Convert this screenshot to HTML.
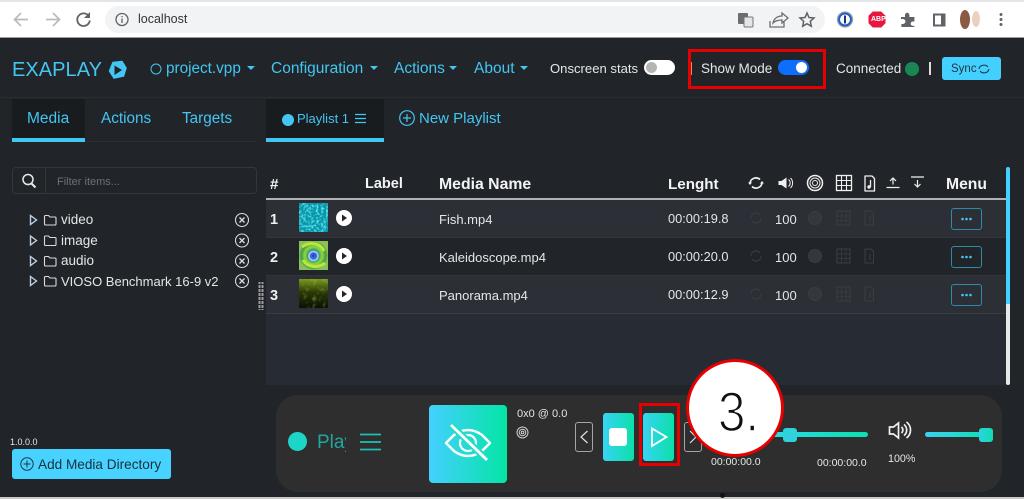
<!DOCTYPE html>
<html><head><meta charset="utf-8"><style>
*{box-sizing:border-box}
html,body{margin:0;padding:0;width:1024px;height:499px;overflow:hidden;background:#212529;font-family:"Liberation Sans",sans-serif}
.t{position:absolute;white-space:nowrap;line-height:1}
.b{position:absolute}
.c{color:#43c6f2}
.w{color:#e4e6e8}
svg{position:absolute;overflow:visible}
.h{font-weight:bold;color:#f2f3f4;font-size:15.200px}
.caret{position:absolute;width:0;height:0;border:4.500px solid transparent;border-top:4.500px solid #43c6f2;border-bottom:0}
.dots{position:absolute;width:31px;height:22px;border:1px solid #2e8ba8;border-radius:3px;left:951px}
.dots svg{left:0;top:0}
</style></head><body>
<!-- browser bar -->
<div class="b" style="left:0;top:0;width:1024px;height:38px;background:#fff"></div>
<div class="b" style="left:0;top:0;width:1024px;height:2px;background:#e3e5e8"></div>
<div class="b" style="left:105px;top:6px;width:720px;height:27px;background:#f1f3f4;border-radius:14px"></div>
<svg style="left:0;top:0" width="1024" height="38" fill="none">
<path d="M28 19.500H15M21 13l-6.500 6.500L21 26" stroke="#b8bbbf" stroke-width="1.700"/>
<path d="M46 19.500h13M53 13l6.500 6.500L53 26" stroke="#b8bbbf" stroke-width="1.700"/>
<path d="M89 16.500a6.300 6.300 0 1 0 .8 4" stroke="#5f6368" stroke-width="1.800"/><path d="M90 12v6h-6z" fill="#5f6368"/>
<circle cx="122" cy="19.500" r="6" stroke="#5f6368" stroke-width="1.300"/><path d="M122 18.500v4.500M122 16v1.300" stroke="#5f6368" stroke-width="1.300"/>
<rect x="738" y="13" width="10" height="11" rx="1" fill="#6a6e72"/><rect x="744" y="17" width="9" height="10" rx="1" fill="#e4e5e6" stroke="#777"/>
<path d="M770 21v6h14v-5M773 23c1-5 5-7 9-7v-3l6 5-6 5v-3c-4 0-7 1-9 3z" stroke="#6a6e72" stroke-width="1.300"/>
<path d="M807 13l2 4.500 5 .5-3.700 3.300 1 4.900-4.300-2.500-4.300 2.500 1-4.900L800 18l5-.5z" stroke="#5f6368" stroke-width="1.500"/>
<circle cx="845" cy="19.500" r="7.500" fill="#1a5fc8" stroke="#9aa0a6" stroke-width="1.300"/><circle cx="845" cy="19.500" r="5" fill="#fff"/><rect x="844" y="15.500" width="2" height="8" fill="#1a3a70"/>
<path d="M873 12h8l4 4v7l-4 4h-8l-4-4v-7z" fill="#e8173f" stroke="#e8173f" stroke-linejoin="round"/>
<path d="M901 17h4v-2a2.200 2.200 0 0 1 4.400 0v2h5v4.500h-1.500a2.200 2.200 0 0 0 0 4.400h1.500V27h-13v-3h1.500a2.500 2.500 0 0 0 0-5H901z" fill="#5f6368"/>
<rect x="934" y="14.500" width="10.500" height="11" stroke="#5f6368" stroke-width="2"/><rect x="941" y="14" width="4" height="12" fill="#5f6368"/>
<ellipse cx="965" cy="19.500" rx="5" ry="9.500" fill="#8a5a44"/><ellipse cx="976" cy="19" rx="4" ry="8" fill="#eccfc0"/>
<circle cx="1001" cy="14.500" r="1.500" fill="#5f6368"/><circle cx="1001" cy="19.500" r="1.500" fill="#5f6368"/><circle cx="1001" cy="24.500" r="1.500" fill="#5f6368"/>
</svg>
<div class="t" style="left:871px;top:16px;font-size:7px;font-weight:bold;color:#fff">ABP</div>
<div class="t" style="left:138px;top:13px;font-size:12.500px;color:#333">localhost</div>
<div class="b" style="left:0;top:37px;width:1024px;height:1px;background:#9a9c9e"></div>
<!-- navbar -->
<div class="t c" style="left:12px;top:60px;font-size:20px;letter-spacing:.05px">EXAPLAY</div>
<svg style="left:108px;top:60px" width="20" height="20"><path d="M5 2.500L14 1.500 18 8 15.500 16 6 18 1.500 11z" fill="#43c6f2" stroke="#43c6f2" stroke-width="1.500" stroke-linejoin="round"/><path d="M6.500 5.500l7.500 4.500-7.500 5z" fill="#212529"/></svg>
<svg style="left:150px;top:63px" width="12" height="12"><circle cx="6" cy="6" r="5" fill="none" stroke="#43c6f2" stroke-width="1"/></svg>
<div class="t c" style="left:166px;top:61px;font-size:15.300px">project.vpp</div><div class="caret" style="left:247px;top:66px"></div>
<div class="t c" style="left:271px;top:61px;font-size:15.500px">Configuration</div><div class="caret" style="left:370px;top:66px"></div>
<div class="t c" style="left:394px;top:61px;font-size:15.500px">Actions</div><div class="caret" style="left:449px;top:66px"></div>
<div class="t c" style="left:474px;top:61px;font-size:15.500px">About</div><div class="caret" style="left:520px;top:66px"></div>
<div class="t w" style="left:550px;top:62px;font-size:13.100px">Onscreen stats</div>
<div class="b" style="left:644px;top:60px;width:31px;height:15px;border-radius:8px;background:#fff"></div>
<div class="b" style="left:646px;top:62px;width:11px;height:11px;border-radius:50%;background:#b5b5b5"></div>
<div class="b" style="left:691px;top:62px;width:1px;height:13px;background:#c89a50"></div>
<div class="t w" style="left:701px;top:62px;font-size:13.500px">Show Mode</div>
<div class="b" style="left:778px;top:60px;width:31px;height:15px;border-radius:8px;background:#0d6efd"></div>
<div class="b" style="left:796px;top:62px;width:11px;height:11px;border-radius:50%;background:#fff"></div>
<div class="b" style="left:825px;top:62px;width:1px;height:13px;background:#bbb"></div>
<div class="t w" style="left:836px;top:62px;font-size:13.500px">Connected</div>
<div class="b" style="left:905px;top:62px;width:14px;height:14px;border-radius:50%;background:#198754"></div>
<div class="b" style="left:929px;top:62px;width:2px;height:13px;background:#ddd"></div>
<div class="b" style="left:942px;top:57px;width:59px;height:23px;border-radius:3px;background:#43d0ff"></div>
<div class="t" style="left:951px;top:64px;font-size:11.500px;color:#1d3540">Sync</div>
<svg style="left:978px;top:63px" width="12" height="12" fill="none" stroke="#1d3540"><path d="M1 6a5 4.500 0 0 1 9-2M11 6a5 4.500 0 0 1-9 2" stroke-width="1"/></svg>
<div class="b" style="left:0;top:97px;width:1024px;height:1px;background:#2a2e33"></div>
<!-- tabs -->
<div class="b" style="left:12px;top:99px;width:73px;height:39px;background:#191c1f"></div>
<div class="b" style="left:12px;top:138px;width:73px;height:4px;background:#43c6f2"></div>
<div class="b" style="left:85px;top:141px;width:172px;height:1px;background:#2c3035"></div>
<div class="t c" style="left:27px;top:111px;font-size:15.500px">Media</div>
<div class="t c" style="left:101px;top:111px;font-size:15.300px">Actions</div>
<div class="t c" style="left:182px;top:111px;font-size:15.300px">Targets</div>
<div class="b" style="left:266px;top:99px;width:118px;height:39px;background:#191c1f"></div>
<div class="b" style="left:266px;top:138px;width:118px;height:4px;background:#43c6f2"></div>
<div class="b" style="left:282px;top:114px;width:12px;height:12px;border-radius:50%;background:#43c6f2"></div>
<div class="t c" style="left:297px;top:112px;font-size:13px">Playlist 1</div>
<svg style="left:355px;top:113px" width="12" height="11" stroke="#43c6f2" stroke-width="1.200"><path d="M0 1.500h11M0 5.500h11M0 9.500h11"/></svg>
<svg style="left:399px;top:110px" width="16" height="16" fill="none" stroke="#43c6f2" stroke-width="1.200"><circle cx="8" cy="8" r="7.300"/><path d="M8 4v8M4 8h8"/></svg>
<div class="t c" style="left:419px;top:111px;font-size:15px">New Playlist</div>
<!-- filter -->
<div class="b" style="left:12px;top:167px;width:245px;height:27px;border:1px solid #33373c;border-radius:4px"></div>
<div class="b" style="left:45px;top:168px;width:1px;height:25px;background:#33373c"></div>
<svg style="left:21px;top:173px" width="16" height="16" fill="none" stroke="#e8e8e8" stroke-width="1.500"><circle cx="7" cy="6.500" r="5"/><path d="M10.500 10.500l4 4" stroke-width="2"/></svg>
<div class="t" style="left:57px;top:177px;font-size:11px;color:#6c7177">Filter items...</div>
<!-- tree -->
<svg style="left:0;top:210px" width="260" height="85" fill="none" stroke="#d8dce0" stroke-width="1.100">
<g><path d="M30.500 5.500l6 4.500-6 4.500z" stroke="#bcd0e8" stroke-width="1.400"/><path d="M44.500 6.500a1 1 0 0 1 1-1h3l1.500 1.500h5a1 1 0 0 1 1 1v6a1 1 0 0 1-1 1h-9.500a1 1 0 0 1-1-1z"/><circle cx="242" cy="10" r="6.500"/><path d="M239.500 7.500l5 5M244.500 7.500l-5 5" stroke-width="1.400"/></g>
<g transform="translate(0,20.500)"><path d="M30.500 5.500l6 4.500-6 4.500z" stroke="#bcd0e8" stroke-width="1.400"/><path d="M44.500 6.500a1 1 0 0 1 1-1h3l1.500 1.500h5a1 1 0 0 1 1 1v6a1 1 0 0 1-1 1h-9.500a1 1 0 0 1-1-1z"/><circle cx="242" cy="10" r="6.500"/><path d="M239.500 7.500l5 5M244.500 7.500l-5 5" stroke-width="1.400"/></g>
<g transform="translate(0,41)"><path d="M30.500 5.500l6 4.500-6 4.500z" stroke="#bcd0e8" stroke-width="1.400"/><path d="M44.500 6.500a1 1 0 0 1 1-1h3l1.500 1.500h5a1 1 0 0 1 1 1v6a1 1 0 0 1-1 1h-9.500a1 1 0 0 1-1-1z"/><circle cx="242" cy="10" r="6.500"/><path d="M239.500 7.500l5 5M244.500 7.500l-5 5" stroke-width="1.400"/></g>
<g transform="translate(0,61)"><path d="M30.500 5.500l6 4.500-6 4.500z" stroke="#bcd0e8" stroke-width="1.400"/><path d="M44.500 6.500a1 1 0 0 1 1-1h3l1.500 1.500h5a1 1 0 0 1 1 1v6a1 1 0 0 1-1 1h-9.500a1 1 0 0 1-1-1z"/><circle cx="242" cy="10" r="6.500"/><path d="M239.500 7.500l5 5M244.500 7.500l-5 5" stroke-width="1.400"/></g>
</svg>
<div class="t w" style="left:61px;top:213px;font-size:13.500px">video</div>
<div class="t w" style="left:61px;top:234px;font-size:13.500px">image</div>
<div class="t w" style="left:61px;top:254px;font-size:13.500px">audio</div>
<div class="t w" style="left:61px;top:275px;font-size:13px">VIOSO Benchmark 16-9 v2</div>
<svg style="left:258px;top:281px" width="6" height="30" fill="#9a9c9e"><path d="M.500 1h2v28h-2zM3.500 1h2v28h-2z"/><path d="M0 3h6v1H0zM0 7h6v1H0zM0 11h6v1H0zM0 15h6v1H0zM0 19h6v1H0zM0 23h6v1H0zM0 27h6v1H0z" fill="#212529"/></svg>
<!-- table head -->
<div class="t h" style="left:270px;top:177px">#</div>
<div class="t h" style="left:365px;top:177px;font-size:14.500px">Label</div>
<div class="t h" style="left:439px;top:177px;font-size:15.800px">Media Name</div>
<div class="t h" style="left:668px;top:177px">Lenght</div>
<div class="t h" style="left:946px;top:177px;font-size:15.700px">Menu</div>
<svg style="left:745px;top:172px" width="185" height="22" fill="none" stroke="#f0f0f0">
<path d="M5 11a6 6 0 0 1 10-3.500M17 11a6 6 0 0 1-10 3.500" stroke-width="1.700"/><path d="M3 10.500h4l-2 2.500zM15 11.500h4l-2-2.500z" fill="#f0f0f0" stroke="none"/>
<path d="M33.500 9h3l5-3.500v11L36.500 13h-3z" fill="#f0f0f0" stroke="none"/><path d="M43.500 7.500a4.500 4.500 0 0 1 0 7M45.500 6a7 7 0 0 1 0 10" stroke-width="1"/>
<circle cx="70" cy="11" r="7.500" stroke-width="1.500"/><circle cx="70" cy="11" r="5" stroke-width="1"/><circle cx="70" cy="11" r="2.500" stroke-width="1"/>
<rect x="91.500" y="3.500" width="15" height="15" stroke-width="1.300"/><path d="M96.500 4v14M101.500 4v14M92 8.500h14M92 13.500h14" stroke-width="1.100"/>
<path d="M120 4h7l2.500 2.500V19H120z" stroke-width="1.300" stroke-linejoin="round"/><path d="M125.500 8v7" stroke-width="1.300"/><circle cx="124" cy="15" r="1.700" fill="#f0f0f0" stroke="none"/>
<path d="M141.500 15.500h13M148 12.500V6M145 9l3-3 3 3" stroke-width="1.200"/>
<path d="M166 5h13M172.500 8v7M169.500 12l3 3 3-3" stroke-width="1.200"/>
</svg>
<div class="b" style="left:266px;top:198px;width:740px;height:2px;background:#b0b2b4"></div>
<!-- rows -->
<div class="b" style="left:266px;top:200px;width:740px;height:37px;background:#2c3036"></div>
<div class="b" style="left:266px;top:237px;width:740px;height:1px;background:#32363b"></div>
<div class="b" style="left:266px;top:275px;width:740px;height:1px;background:#32363b"></div>
<div class="b" style="left:266px;top:276px;width:740px;height:37px;background:#2c3036"></div>
<div class="b" style="left:266px;top:313px;width:740px;height:1px;background:#3a3e43"></div>
<div class="t" style="left:270px;top:213px;font-size:14.500px;font-weight:bold;color:#f0f0f0">1</div>
<div class="t" style="left:270px;top:251px;font-size:14.500px;font-weight:bold;color:#f0f0f0">2</div>
<div class="t" style="left:270px;top:289px;font-size:14.500px;font-weight:bold;color:#f0f0f0">3</div>
<svg style="left:299px;top:203px" width="30" height="30"><defs>
<filter id="n" x="0" y="0" width="100%" height="100%"><feTurbulence type="fractalNoise" baseFrequency=".4" numOctaves="2" seed="4"/><feColorMatrix values="0 0 0 0 .1  0 0 0 0 .88  0 0 0 0 .92  0 0 0 3 -1.300"/></filter>
<filter id="n2" x="0" y="0" width="100%" height="100%"><feTurbulence type="fractalNoise" baseFrequency=".22" numOctaves="2" seed="9"/><feColorMatrix values="0 0 0 0 .45  0 0 0 0 .6  0 0 0 0 .08  0 0 0 2 -1.050"/></filter>
<radialGradient id="k"><stop offset="0" stop-color="#2a3fb8"/><stop offset=".25" stop-color="#3f7ad8"/><stop offset=".42" stop-color="#38a878"/><stop offset=".6" stop-color="#9ad82c"/><stop offset=".85" stop-color="#3f9a50"/><stop offset="1" stop-color="#8ac058"/></radialGradient>
<linearGradient id="p" x1="0" y1="0" x2="0" y2="1"><stop offset="0" stop-color="#7a9a1c"/><stop offset=".45" stop-color="#2a3a08"/><stop offset="1" stop-color="#0a1003"/></linearGradient></defs>
<rect width="29" height="29" fill="#0d92a8"/><rect width="29" height="29" filter="url(#n)"/></svg>
<svg style="left:299px;top:241px" width="30" height="30"><rect width="29" height="29" fill="url(#k)"/><circle cx="14.500" cy="15" r="4.500" fill="none" stroke="#b0c4ff" stroke-width="1.600"/><path d="M3 6c8-6 18-4 22 4M26 22c-8 6-18 4-22-3" fill="none" stroke="#b8e840" stroke-width="3"/></svg>
<svg style="left:299px;top:279px" width="30" height="30"><rect width="29" height="29" fill="url(#p)"/><rect width="29" height="29" filter="url(#n2)" opacity=".6"/></svg>
<svg style="left:336px;top:210px" width="16" height="92"><g id="pb"><circle cx="8" cy="8" r="8" fill="#fff"/><path d="M6 4.500l5 3.500-5 3.500z" fill="#2a2230"/></g><use href="#pb" y="38"/><use href="#pb" y="76"/></svg>
<div class="t w" style="left:439px;top:213px;font-size:13px">Fish.mp4</div>
<div class="t w" style="left:439px;top:251px;font-size:13px">Kaleidoscope.mp4</div>
<div class="t w" style="left:439px;top:289px;font-size:13px">Panorama.mp4</div>
<div class="t w" style="left:668px;top:213px;font-size:12.800px">00:00:19.8</div>
<div class="t w" style="left:668px;top:251px;font-size:12.800px">00:00:20.0</div>
<div class="t w" style="left:668px;top:289px;font-size:12.800px">00:00:12.9</div>
<div class="t w" style="left:775px;top:213px;font-size:13px">100</div>
<div class="t w" style="left:775px;top:251px;font-size:13px">100</div>
<div class="t w" style="left:775px;top:289px;font-size:13px">100</div>
<svg style="left:745px;top:207px" width="140" height="100" fill="none" stroke="#3a3e43">
<g id="ri"><path d="M6 11a5 5 0 0 1 9-3M16 11a5 5 0 0 1-9 3" stroke-width="1"/><circle cx="70" cy="11" r="6.500" fill="#34383d" stroke-width="1"/><rect x="92" y="4" width="13" height="14" stroke-width="1"/><path d="M96.500 4v14M101 4v14M92 9h13M92 13.500h13" stroke-width=".8"/><path d="M120 4h6l2.500 2.500V18H120z" stroke-width="1"/><path d="M125 9v6" stroke-width="1"/></g>
<use href="#ri" y="38"/><use href="#ri" y="76"/>
</svg>
<div class="dots" style="top:208px"><svg width="29" height="20" fill="#43c6f2"><circle cx="10.500" cy="10" r="1.300"/><circle cx="14.500" cy="10" r="1.300"/><circle cx="18.500" cy="10" r="1.300"/></svg></div>
<div class="dots" style="top:246px"><svg width="29" height="20" fill="#43c6f2"><circle cx="10.500" cy="10" r="1.300"/><circle cx="14.500" cy="10" r="1.300"/><circle cx="18.500" cy="10" r="1.300"/></svg></div>
<div class="dots" style="top:284px"><svg width="29" height="20" fill="#43c6f2"><circle cx="10.500" cy="10" r="1.300"/><circle cx="14.500" cy="10" r="1.300"/><circle cx="18.500" cy="10" r="1.300"/></svg></div>
<!-- scrollbar -->
<div class="b" style="left:1006px;top:167px;width:4px;height:137px;background:#43d0ff;border-radius:2px 2px 0 0"></div>
<div class="b" style="left:1006px;top:304px;width:4px;height:81px;background:#e8e8e8;border-radius:0 0 2px 2px"></div>
<div class="b" style="left:266px;top:314px;width:740px;height:71px;background:#272b33"></div>
<!-- left bottom -->
<div class="t" style="left:10px;top:438px;font-size:9px;color:#e4e6e8">1.0.0.0</div>
<div class="b" style="left:12px;top:449px;width:159px;height:30px;border-radius:3px;background:#48d2ff"></div>
<svg style="left:20px;top:457px" width="15" height="15" fill="none" stroke="#1d3a48" stroke-width="1"><circle cx="7" cy="7" r="6.200"/><path d="M7 3.500v7M3.500 7h7"/></svg>
<div class="t" style="left:38px;top:458px;font-size:13.600px;color:#17303c">Add Media Directory</div>
<!-- player -->
<div class="b" style="left:276px;top:395px;width:726px;height:97px;border-radius:22px;background:#2e2e2e"></div>
<div class="b" style="left:288px;top:432px;width:19px;height:19px;border-radius:50%;background:#1dd5c6"></div>
<div class="b" style="left:317px;top:432px;width:29px;height:22px;overflow:hidden"><div class="t" style="left:0;top:1px;font-size:19px;color:#1fa89e">Playlist</div></div>
<svg style="left:360px;top:433px" width="21" height="18" stroke="#1dc0b4" stroke-width="1.800"><path d="M0 1.500h21M0 9h21M0 16.500h21"/></svg>
<svg style="left:429px;top:405px" width="78" height="78"><defs><linearGradient id="g"><stop offset="0" stop-color="#44d0ff"/><stop offset="1" stop-color="#03e5a5"/></linearGradient></defs>
<rect width="78" height="78" rx="4" fill="url(#g)"/>
<g fill="none" stroke="#fff" stroke-width="2.500" stroke-linejoin="round"><path d="M17 38l8-8c4-3 9-5 14-5s10 2 14 5l8 8-8 8c-4 3-9 5-14 5s-10-2-14-5z"/><circle cx="39" cy="38" r="8" stroke-width="2.200"/><path d="M22 20l36 35" stroke-width="7" stroke="#25dcc8"/><path d="M22 20l36 35" stroke-width="2.800"/></g></svg>
<div class="t w" style="left:517px;top:409px;font-size:11px">0x0 @ 0.0</div>
<svg style="left:516px;top:426px" width="13" height="13" fill="none" stroke="#d0d0d0" stroke-width="1"><circle cx="6.500" cy="6.500" r="5.500"/><circle cx="6.500" cy="6.500" r="3.300"/><circle cx="6.500" cy="6.500" r="1.300"/></svg>
<div class="b" style="left:575px;top:422px;width:18px;height:30px;border:1px solid #a5a5a5;border-radius:3px"></div>
<svg style="left:575px;top:422px" width="18" height="30" fill="none" stroke="#e0e0e0" stroke-width="1.200"><path d="M12.500 9l-6.500 6 6.500 6"/></svg>
<div class="b" style="left:684px;top:422px;width:18px;height:30px;border:1px solid #a5a5a5;border-radius:3px"></div>
<svg style="left:684px;top:422px" width="18" height="30" fill="none" stroke="#e0e0e0" stroke-width="1.200"><path d="M6 9l6 6-6 6"/></svg>
<svg style="left:603px;top:413px" width="31" height="48"><defs><linearGradient id="g2"><stop offset="0" stop-color="#38d4f4"/><stop offset="1" stop-color="#0ae0a8"/></linearGradient></defs><rect width="31" height="48" rx="3" fill="url(#g2)"/><rect x="6" y="15" width="18" height="18" rx="3" fill="#fff"/></svg>
<svg style="left:643px;top:413px" width="31" height="48"><rect width="31" height="48" rx="3" fill="url(#g2)"/><path d="M9 15.500l14.500 8.500L9 33z" fill="none" stroke="#fff" stroke-width="1.800"/></svg>
<div class="b" style="left:639px;top:403px;width:41px;height:63px;border:3px solid #e60000"></div>
<!-- sliders -->
<div class="b" style="left:770px;top:432px;width:98px;height:5px;border-radius:3px;background:linear-gradient(90deg,#2cd8e8,#0be0ae)"></div>
<div class="b" style="left:783px;top:428px;width:14px;height:14px;border-radius:3px;background:#30d0dc"></div>
<div class="t w" style="left:711px;top:457px;font-size:10.500px">00:00:00.0</div>
<div class="t w" style="left:817px;top:458px;font-size:10.500px">00:00:00.0</div>
<svg style="left:888px;top:420px" width="24" height="20" fill="none" stroke="#f0f0f0" stroke-width="1.700"><path d="M1.500 7h4l5-4v15l-5-4h-4z"/><path d="M13.500 7a4 4 0 0 1 0 6M16 4.500a7 7 0 0 1 0 11M18.500 2a10 10 0 0 1 0 16"/></svg>
<div class="t w" style="left:888px;top:454px;font-size:10.700px">100%</div>
<div class="b" style="left:925px;top:432px;width:68px;height:5px;border-radius:3px;background:linear-gradient(90deg,#3cd0f4,#0be0ae)"></div>
<div class="b" style="left:979px;top:428px;width:14px;height:14px;border-radius:3px;background:linear-gradient(90deg,#2cd4e0,#10dcb0)"></div>
<!-- circle callout -->
<div class="b" style="left:686px;top:359px;width:98px;height:98px;border-radius:50%;background:#fff;border:3px solid #e60000"></div>
<div class="t" style="left:718px;top:384px;font-size:56px;color:#111;-webkit-text-stroke:1.500px #fff;transform:scaleX(.88);transform-origin:0 0">3.</div>
<!-- red box show mode -->
<div class="b" style="left:688px;top:49px;width:138px;height:40px;border:3px solid #e60000"></div>
<div class="b" style="left:0;top:497px;width:1024px;height:2px;background:#c8c8c8"></div>
<div class="b" style="left:720px;top:493px;width:5px;height:5px;border-radius:50%;background:#111"></div>
</body></html>
